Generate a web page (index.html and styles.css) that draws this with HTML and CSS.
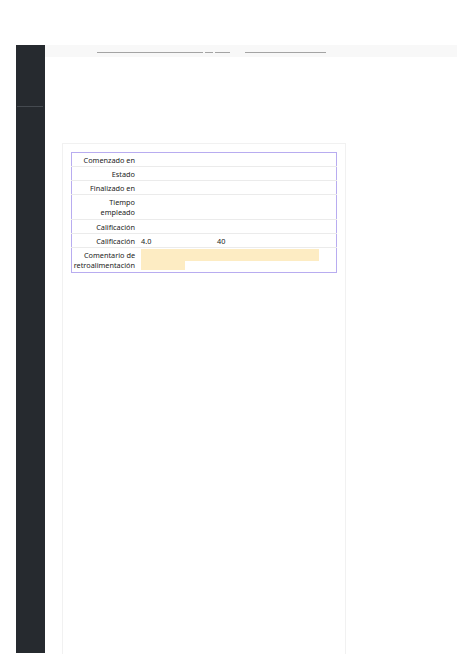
FILE: index.html
```html
<!DOCTYPE html>
<html lang="es">
<head>
    <meta charset="UTF-8">
    <meta name="viewport" content="width=device-width, initial-scale=1.0">
    <title>Revisión del intento</title>
    <link rel="stylesheet" href="styles.css">
</head>
<body>
    <div class="page">
        <div class="sidebar">
            <div class="sidebar-sep"></div>
        </div>
        <div class="main">
            <div class="topbar">
                <span class="crumb w106"></span>
                <span class="crumb w8"></span>
                <span class="crumb w15"></span>
                <span class="crumb w81 gap"></span>
            </div>
            <div class="card">
                <table class="summary">
                    <tr>
                        <th>Comenzado en</th>
                        <td></td>
                    </tr>
                    <tr>
                        <th>Estado</th>
                        <td></td>
                    </tr>
                    <tr>
                        <th>Finalizado en</th>
                        <td></td>
                    </tr>
                    <tr class="tall">
                        <th>Tiempo<br>empleado</th>
                        <td></td>
                    </tr>
                    <tr>
                        <th>Calificación</th>
                        <td></td>
                    </tr>
                    <tr>
                        <th>Calificación</th>
                        <td><span class="grade">4.0</span>40</td>
                    </tr>
                    <tr class="tall">
                        <th>Comentario de<br>retroalimentación</th>
                        <td class="feedback">
                            <div class="hl full"></div>
                            <div class="hl part"></div>
                        </td>
                    </tr>
                </table>
            </div>
        </div>
    </div>
</body>
</html>
```

FILE: styles.css
```css
body {
    margin: 0;
    background: #fff;
    font-family: "Noto Sans", Arial, sans-serif;
    color: #222;
}
.page {
    display: flex;
    padding: 45px 0 0 16px;
}
.sidebar {
    width: 29px;
    height: 608px;
    background: #262a2f;
    padding-top: 61px;
    box-sizing: border-box;
}
.sidebar-sep {
    height: 1px;
    margin: 0 2px 0 1px;
    background: #454a50;
}
.main {
    display: flex;
    flex-direction: column;
}
.topbar {
    width: 412px;
    height: 12px;
    background: #f8f8f8;
    display: flex;
    align-items: flex-start;
    padding: 7px 0 0 52px;
    box-sizing: border-box;
}
.crumb {
    height: 1px;
    background: #a4a4a4;
    margin-right: 2px;
}
.crumb.gap {
    margin-left: 13px;
}
.w106 { width: 106px; }
.w8 { width: 8px; }
.w15 { width: 15px; }
.w81 { width: 81px; }
.card {
    width: 284px;
    height: 511px;
    margin: 86px 0 0 17px;
    border: 1px solid #f1f1f1;
    border-bottom: none;
    padding: 8px;
    box-sizing: border-box;
}
.summary {
    width: 266px;
    border: 1px solid #b8acf0;
    border-collapse: collapse;
    font-size: 7.3px;
    line-height: 9.5px;
}
.summary tr {
    border-bottom: 1px solid #ebebeb;
}
.summary tr:last-child {
    border-bottom: none;
}
.summary th {
    width: 63px;
    font-weight: normal;
    text-align: right;
    padding: 2.5px 3px 1px 0;
    height: 9.5px;
    white-space: nowrap;
}
.summary td {
    padding: 2.5px 0 1px 3px;
    vertical-align: middle;
}
.summary tr.tall th {
    padding-top: 3px;
    padding-bottom: 2px;
}
.grade {
    display: inline-block;
    width: 76px;
}
.feedback {
    vertical-align: top;
}
.summary td.feedback {
    padding: 0 0 1px 3px;
}
.hl {
    background: #fdecc3;
}
.hl.full {
    width: 178px;
    height: 12px;
}
.hl.part {
    width: 44px;
    height: 9px;
}
```
